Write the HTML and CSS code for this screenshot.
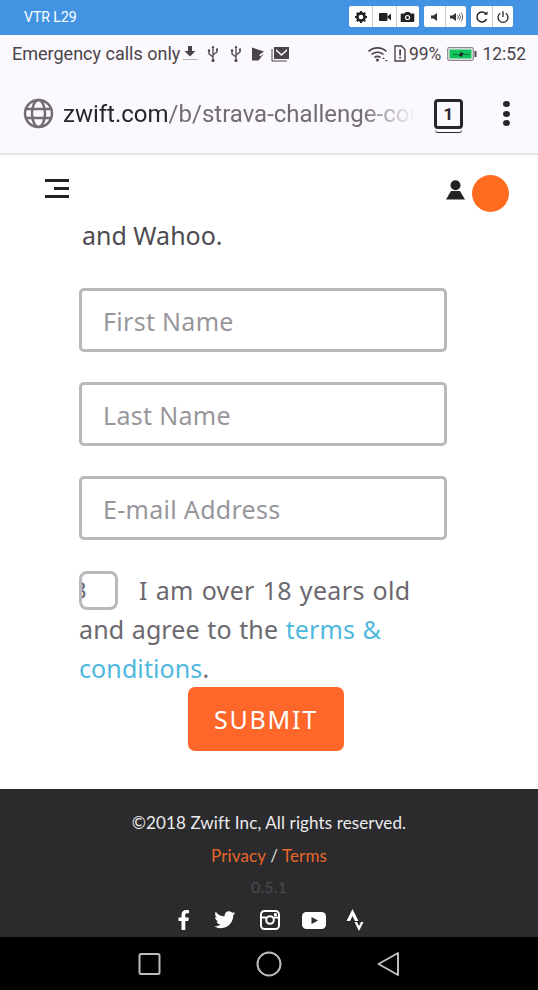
FILE: index.html
```html
<!DOCTYPE html>
<html lang="en">
<head>
    <meta charset="UTF-8">
    <meta name="viewport" content="width=device-width, initial-scale=1.0">
    <title>Zwift Strava Challenge</title>
    <link rel="stylesheet" href="styles.css">
</head>
<body>
    <div class="phone">
        <!-- Emulator toolbar -->
        <div class="emu-bar">
            <span class="emu-name">VTR L29</span>
            <div class="emu-tools">
                <div class="emu-group">
                    <span class="emu-btn wide"><svg width="14" height="14" viewBox="0 0 14 14"><circle cx="7" cy="7" r="3.6" fill="none" stroke="#222" stroke-width="2.6"/><path d="M7 1v2M7 11v2M1 7h2M11 7h2M2.8 2.8l1.4 1.4M9.8 9.8l1.4 1.4M2.8 11.2l1.4-1.4M9.8 4.2l1.4-1.4" stroke="#222" stroke-width="2"/></svg></span>
                    <span class="emu-btn wide"><svg width="14" height="14" viewBox="0 0 14 14"><rect x="1" y="3" width="8.5" height="8" rx="1" fill="#222"/><path d="M9.500 6.500L13 3.500v7L9.500 7.500z" fill="#222"/></svg></span>
                    <span class="emu-btn wide"><svg width="15" height="14" viewBox="0 0 15 14"><path d="M1.500 3.500h3l1-1.500h4l1 1.500h3a.8.8 0 0 1 .8.8v7a.8.8 0 0 1-.8.8h-12a.8.8 0 0 1-.8-.8v-7a.8.8 0 0 1 .8-.8z" fill="#222"/><circle cx="7.500" cy="7.500" r="2.600" fill="#fff"/><circle cx="7.500" cy="7.500" r="1.500" fill="#222"/></svg></span>
                </div>
                <div class="emu-group">
                    <span class="emu-btn"><svg width="12" height="12" viewBox="0 0 12 12"><path d="M2 4.500h2.500L8 2v8L4.500 7.500H2z" fill="#333"/></svg></span>
                    <span class="emu-btn"><svg width="15" height="12" viewBox="0 0 15 12"><path d="M1 4.500h2.500L7 2v8L3.500 7.500H1z" fill="#333"/><path d="M8.500 4a3 3 0 0 1 0 4M10.200 2.800a5 5 0 0 1 0 6.400M12 1.500a7 7 0 0 1 0 9" fill="none" stroke="#666"/></svg></span>
                </div>
                <div class="emu-group">
                    <span class="emu-btn"><svg width="14" height="14" viewBox="0 0 14 14"><path d="M11.500 9.200A5 5 0 1 1 10.600 3.500" fill="none" stroke="#222" stroke-width="1.500"/><path d="M8.800 4.800h3.700V1.200z" fill="#222"/></svg></span>
                    <span class="emu-btn"><svg width="14" height="14" viewBox="0 0 14 14"><path d="M4.300 3.200a5 5 0 1 0 5.400 0M7 1.200v5.800" fill="none" stroke="#222" stroke-width="1.300"/></svg></span>
                </div>
            </div>
        </div>

        <!-- Android status bar -->
        <div class="status-bar">
            <div class="status-left">
                <span class="st-carrier">Emergency calls only</span>
                <svg class="st-download" width="17" height="17" viewBox="0 0 17 17"><path d="M6 1h4v5h3.500L8 11.500 2.500 6H6z" fill="#4a4549"/><rect x="1" y="14" width="15" height="1" fill="#b8b5b8"/></svg>
                <svg class="st-usb" width="12" height="18" viewBox="0 0 12 18"><path d="M6 1v15M6 12L2 9V6M6 10l4-3V5" fill="none" stroke="#4a4549" stroke-width="1.300"/><circle cx="6" cy="15.500" r="1.600" fill="#4a4549"/><circle cx="2" cy="5.500" r="1.200" fill="#4a4549"/><rect x="9" y="3.500" width="2" height="2" fill="#4a4549"/><path d="M4.500 3L6 1l1.500 2z" fill="#4a4549"/></svg>
                <svg class="st-usb second" width="12" height="18" viewBox="0 0 12 18"><path d="M6 1v15M6 12L2 9V6M6 10l4-3V5" fill="none" stroke="#4a4549" stroke-width="1.300"/><circle cx="6" cy="15.500" r="1.600" fill="#4a4549"/><circle cx="2" cy="5.500" r="1.200" fill="#4a4549"/><rect x="9" y="3.500" width="2" height="2" fill="#4a4549"/><path d="M4.500 3L6 1l1.500 2z" fill="#4a4549"/></svg>
                <svg class="st-play" width="14" height="14" viewBox="0 0 14 14"><path d="M1 .5L13 4.500 8 8l1.500 1.200L13 6.500 7.500 13.500H1z" fill="#4a4549"/></svg>
                <svg class="st-mail" width="19" height="16" viewBox="0 0 19 16"><path d="M1 3v12h15" fill="none" stroke="#4a4549" stroke-width="1"/><rect x="3" y="1" width="15" height="12" fill="#4a4549"/><path d="M5 3l5.500 5L16 3v2l-5.500 5L5 5z" fill="#fbf8fe"/></svg>
            </div>
            <div class="status-right">
                <svg width="22" height="18" viewBox="0 0 22 18"><path d="M1.500 6.500a13 13 0 0 1 18 0M4.500 9.500a9 9 0 0 1 12 0M7.500 12.500a5 5 0 0 1 6 0" fill="none" stroke="#4a4549" stroke-width="1.600"/><circle cx="10.500" cy="15" r="1.500" fill="#4a4549"/><path d="M15 14l1.500-1.500L18 14zM18 15l1.500 1.500L21 15z" fill="#4a4549"/></svg>
                <svg class="st-sim" width="12" height="17" viewBox="0 0 12 17"><path d="M1 1h6.500L11 4.500V16H1z" fill="none" stroke="#4a4549" stroke-width="1.400"/><rect x="5.200" y="4.500" width="1.800" height="6" fill="#4a4549"/><rect x="5.200" y="11.800" width="1.800" height="1.800" fill="#4a4549"/></svg>
                <span class="st-pct">99%</span>
                <svg class="st-battery" width="30" height="14" viewBox="0 0 30 14"><rect x=".7" y=".7" width="25.600" height="12.600" rx="1.500" fill="#f3f1f4" stroke="#8a888a" stroke-width="1.200"/><rect x="2.500" y="2.500" width="22" height="9" fill="#0fc45c"/><path d="M6 7.500h7l.500-2.500 4 2h5v.6h-7l-.500 2.500-4-2H6z" fill="#1c1c1c"/><rect x="27.500" y="4" width="2" height="6" fill="#4a4549"/></svg>
                <span class="st-time">12:52</span>
            </div>
        </div>

        <!-- Browser url bar -->
        <div class="url-bar">
            <svg class="globe" width="31" height="31" viewBox="0 0 31 31"><g fill="none" stroke="#716d72" stroke-width="2.500"><circle cx="15.500" cy="15.500" r="13.500"/><ellipse cx="15.500" cy="15.500" rx="6.500" ry="13.500"/><path d="M2.500 11h26M2.500 20h26"/></g></svg>
            <div class="url-text"><span class="url-host">zwift.com</span>/b/strava-challenge-con</div>
            <div class="tab-count">1</div>
            <div class="url-menu"><i></i><i></i><i></i></div>
        </div>

        <!-- Page content -->
        <div class="page">
            <div class="site-nav">
                <div class="hamburger"><i></i><i class="short"></i><i></i></div>
                <div class="account">
                    <svg width="19" height="20" viewBox="0 0 19 20"><circle cx="9.500" cy="5.200" r="5" fill="#222"/><path d="M5 11h9l5 8.500H0z" fill="#222"/></svg>
                    <div class="avatar"></div>
                </div>
            </div>

            <p class="intro">and Wahoo.</p>

            <form class="signup">
                <input class="field" type="text" placeholder="First Name">
                <input class="field" type="text" placeholder="Last Name">
                <input class="field" type="text" placeholder="E-mail Address">
                <div class="agree">
                    <span class="checkbox"><span class="check-mark">3</span></span><span class="agree-first">I am over 18 years old</span> and agree to the <a href="#">terms &amp; conditions</a>.
                </div>
                <button class="submit" type="button">SUBMIT</button>
            </form>
        </div>

        <!-- Page footer -->
        <div class="footer">
            <div class="copyright">©2018 Zwift Inc, All rights reserved.</div>
            <div class="legal"><a href="#">Privacy</a> / <a href="#">Terms</a></div>
            <div class="version">0.5.1</div>
            <div class="social">
                <svg width="12" height="22" viewBox="0 0 12 22"><path d="M3.500 21V12H.5V8.500h3V6c0-3.200 1.900-5 4.700-5 1.300 0 2.400.1 2.800.2v3.100H9.100C7.600 4.300 7.300 5 7.300 6.100v2.400h3.500l-.5 3.500h-3v9z" fill="#fff"/></svg>
                <svg width="22" height="18" viewBox="0 0 24 20"><path d="M23.500 2.600c-.9.400-1.800.6-2.800.8 1-.6 1.800-1.500 2.100-2.700-.9.600-2 1-3 1.200C18.900.9 17.600.3 16.300.3c-2.700 0-4.800 2.200-4.800 4.800 0 .4 0 .7.100 1.100C7.600 6 4 4.100 1.700.9c-.4.700-.7 1.600-.7 2.400 0 1.700.9 3.200 2.100 4-.8 0-1.500-.2-2.200-.6v.1c0 2.300 1.700 4.300 3.900 4.700-.4.100-.8.200-1.300.2-.3 0-.6 0-.9-.1.600 1.900 2.400 3.300 4.500 3.300-1.600 1.300-3.700 2-6 2H0c2.100 1.400 4.700 2.200 7.400 2.200 8.900 0 13.700-7.300 13.700-13.700v-.6c1-.7 1.800-1.500 2.400-2.500z" fill="#fff"/></svg>
                <svg width="20" height="20" viewBox="0 0 20 20"><rect x="1" y="1" width="18" height="18" rx="3.500" fill="none" stroke="#fff" stroke-width="2"/><path d="M1 7.500h5M14 7.500h5" stroke="#fff" stroke-width="2"/><circle cx="10" cy="10" r="3.800" fill="none" stroke="#fff" stroke-width="2"/><rect x="14" y="3.200" width="2.800" height="2.800" fill="#fff"/></svg>
                <svg class="soc-youtube" width="24" height="17" viewBox="0 0 24 17"><rect width="24" height="17" rx="4.500" fill="#fff"/><path d="M9.500 5l6.500 3.500-6.500 3.500z" fill="#2c2b2d"/></svg>
                <svg class="soc-strava" width="18" height="22" viewBox="0 0 18 22"><path d="M6.500 0L.5 12h3.600l2.400-5 2.500 5h3.500z" fill="#fff"/><path d="M8.500 13l4.500 9 4.500-9h-2.500L13 17l-2-4z" fill="#fff"/></svg>
            </div>
        </div>

        <!-- Android nav bar -->
        <div class="nav-bar">
            <svg width="24" height="24" viewBox="0 0 24 24"><rect x="2.500" y="2" width="20" height="20" rx="1.500" fill="none" stroke="#bcbcbc" stroke-width="2"/></svg>
            <svg width="26" height="26" viewBox="0 0 26 26"><circle cx="13" cy="13" r="11.500" fill="none" stroke="#bcbcbc" stroke-width="2"/></svg>
            <svg width="24" height="26" viewBox="0 0 24 26"><path d="M21 2v22L1.500 13z" fill="none" stroke="#bcbcbc" stroke-width="2" stroke-linejoin="round"/></svg>
        </div>
    </div>
</body>
</html>
```

FILE: styles.css
```css
html, body {
    margin: 0;
    padding: 0;
}

body {
    font-family: 'Roboto', sans-serif;
    background-color: #ffffff;
}

.phone {
    width: 538px;
    height: 990px;
    display: flex;
    flex-direction: column;
    overflow: hidden;
}

/* emulator toolbar */
.emu-bar {
    height: 35px;
    flex: none;
    background-color: #4393e3;
    display: flex;
    align-items: center;
    justify-content: space-between;
    padding: 0 25px 0 24px;
    box-sizing: border-box;
}

.emu-name {
    color: #ffffff;
    font-family: 'Roboto', sans-serif;
    font-size: 14px;
    margin-bottom: 2px;
}

.emu-tools {
    display: flex;
    gap: 5px;
}

.emu-group {
    display: flex;
    height: 21px;
    background-color: #ffffff;
    border-radius: 2px;
    margin-bottom: 2px;
}

.emu-btn {
    display: flex;
    align-items: center;
    justify-content: center;
    box-sizing: border-box;
    width: 21px;
    border-left: 1px solid #c9c9c9;
}

.emu-btn.wide {
    width: 23.330px;
}

.emu-btn:first-child {
    border-left: none;
}

/* status bar */
.status-bar {
    height: 37px;
    flex: none;
    background-color: #fbf8fe;
    display: flex;
    align-items: center;
    justify-content: space-between;
    padding: 0 12px;
    color: #4a4549;
    font-size: 17.500px;
}

.status-left, .status-right {
    display: flex;
    align-items: center;
}

.st-carrier {
    font-size: 18px;
}

.st-download {
    margin-left: 2px;
}

.st-usb {
    margin-left: 8px;
}

.st-usb.second {
    margin-left: 11px;
}

.st-play {
    margin-left: 9px;
}

.st-mail {
    margin-left: 6px;
}

.st-sim {
    margin-left: 5px;
}

.st-pct {
    margin-left: 3px;
}

.st-battery {
    margin-left: 6px;
}

.st-time {
    margin-left: 5px;
}

/* url bar */
.url-bar {
    height: 83px;
    flex: none;
    box-sizing: border-box;
    background-color: #fbf8fe;
    border-bottom: 2px solid #e6e4e8;
    display: flex;
    align-items: center;
    padding: 2px 0 0 23px;
}

.url-text {
    width: 352px;
    margin-left: 9px;
    font-size: 24px;
    color: #716d72;
    white-space: nowrap;
    overflow: hidden;
    -webkit-mask-image: linear-gradient(to right, #000 85%, transparent);
    mask-image: linear-gradient(to right, #000 85%, transparent);
}

.url-host {
    color: #29262b;
}

.tab-count {
    width: 29px;
    height: 30px;
    margin-left: 19px;
    box-sizing: border-box;
    border: 3px solid #29262b;
    border-radius: 4px;
    font-size: 17px;
    font-weight: 700;
    line-height: 25px;
    text-align: center;
    color: #29262b;
    box-shadow: 0 4px 0 -1px #fbf8fe, 0 5px 0 -1px #29262b;
}

.url-menu {
    margin-left: 40px;
    display: flex;
    flex-direction: column;
    gap: 3.500px;
}

.url-menu i {
    display: block;
    width: 7px;
    height: 6px;
    border-radius: 50%;
    background-color: #29262b;
}

/* page */
.page {
    height: 634px;
    flex: none;
    box-sizing: border-box;
    background-color: #ffffff;
}

.site-nav {
    height: 66px;
    display: flex;
    justify-content: space-between;
    padding: 24px 29px 0 45px;
    box-sizing: border-box;
}

.hamburger {
    width: 24px;
    display: flex;
    flex-direction: column;
    align-items: flex-end;
    gap: 5px;
}

.hamburger i {
    display: block;
    width: 24px;
    height: 3px;
    background-color: #222222;
}

.hamburger i.short {
    width: 15px;
}

.account {
    display: flex;
    align-items: flex-start;
    gap: 7px;
    margin-top: -4px;
}

.account svg {
    margin-top: 5px;
}

.avatar {
    width: 37px;
    height: 37px;
    border-radius: 50%;
    background-color: #ff6c1f;
}

.intro, .agree, .field, .submit {
    font-family: 'Noto Sans', sans-serif;
    font-size: 25px;
}

.intro {
    margin: 0 0 0 82px;
    color: #4d4b50;
    height: 67px;
    line-height: 28px;
}

.signup {
    width: 368px;
    margin-left: 79px;
    display: flex;
    flex-direction: column;
    align-items: flex-start;
}

.field {
    width: 368px;
    height: 64px;
    box-sizing: border-box;
    margin-bottom: 30px;
    padding: 1px 21px 0;
    border: 3px solid #b9b8bc;
    border-radius: 5px;
    background-color: #ffffff;
    outline: none;
    letter-spacing: 0.3px;
}

.field::placeholder {
    color: #98969b;
    opacity: 1;
}

.agree {
    margin-top: 1px;
    line-height: 39px;
    color: #6b696e;
    width: 340px;
    letter-spacing: 0.1px;
    word-spacing: 1px;
}

.agree-first {
    letter-spacing: 0.35px;
}

.agree a {
    color: #4fb8de;
    text-decoration: none;
}

.checkbox {
    display: inline-block;
    vertical-align: top;
    width: 39px;
    height: 39px;
    box-sizing: border-box;
    margin: 0 21px 0 0;
    border: 3px solid #b9b8bc;
    border-radius: 8px;
    overflow: hidden;
    line-height: 32px;
    font-size: 24px;
}

.check-mark {
    display: block;
    margin-left: -9px;
    color: #6b696e;
}

.submit {
    width: 156px;
    height: 64px;
    margin: -1px 0 0 109px;
    padding: 0;
    border: none;
    border-radius: 7px;
    background-color: #ff6629;
    color: #ffffff;
    letter-spacing: 1.8px;
}

/* footer */
.footer {
    height: 148px;
    flex: none;
    overflow: hidden;
    box-sizing: border-box;
    background-color: #2b2a2c;
    font-family: 'Lato', sans-serif;
    font-size: 17px;
    letter-spacing: 0.12px;
    text-align: center;
    color: #ececec;
    padding-top: 23px;
}

.copyright {
    line-height: 22px;
}

.legal {
    margin-top: 11px;
    line-height: 22px;
    color: #dddddd;
}

.legal a {
    color: #e8672c;
    text-decoration: none;
}

.version {
    margin-top: 9px;
    line-height: 22px;
    font-size: 16px;
    color: #4c4b4e;
}

.social {
    margin-top: 11px;
    padding-left: 4px;
    display: flex;
    justify-content: center;
    align-items: center;
    gap: 24px;
}

.soc-youtube {
    margin-left: -2px;
}

.soc-strava {
    margin-left: -4px;
}

/* nav bar */
.nav-bar {
    flex: 1;
    background-color: #000000;
    display: flex;
    align-items: center;
    justify-content: center;
    gap: 95px;
}
```
